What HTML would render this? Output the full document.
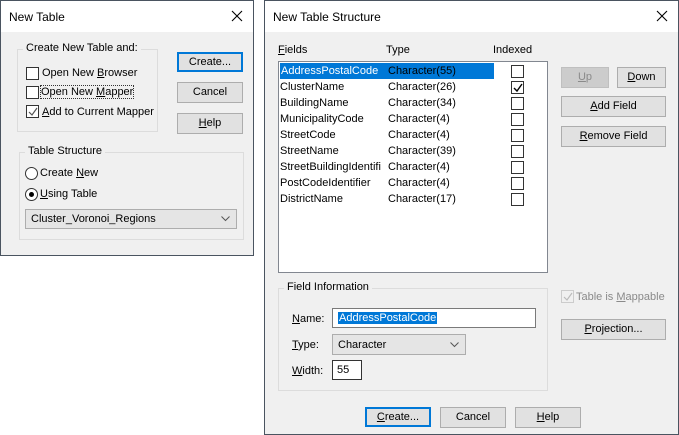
<!DOCTYPE html>
<html><head><style>
*{box-sizing:border-box;margin:0;padding:0}
body{width:679px;height:435px;background:#fff;font-family:"Liberation Sans",sans-serif;font-size:11px;color:#000;position:relative;overflow:hidden}
.a{position:absolute}
.dlg{position:absolute;background:#f0f0f0;border:1px solid #4a5460}
.tb{position:absolute;left:0;top:0;right:0;height:31px;background:#fff;font-size:12px;padding:9px 0 0 8px}
.x{position:absolute;right:10px;top:9px}
.grp{position:absolute;border:1px solid #dcdcdc}
.gl{position:absolute;background:#f0f0f0;padding:0 3px;top:-8px;left:5px}
.btn{position:absolute;background:#e1e1e1;border:1px solid #adadad;text-align:center;line-height:18px}
.def{border:2px solid #0078d7;line-height:16px}
.cb{position:absolute;width:13px;height:13px;border:1px solid #333;background:#fff}
.rd{position:absolute;width:13px;height:13px;border:1px solid #333;border-radius:50%;background:#fff}
.combo{position:absolute;background:#e5e5e5;border:1px solid #adadad;padding:3px 0 0 5px}
.chev{position:absolute;right:6px;top:6px}
u{text-decoration:underline}
.row{position:absolute;left:0;height:16px;line-height:16px}
</style></head><body>
<div class="dlg" style="left:0;top:0;width:254px;height:256px">
 <div class="tb">New Table<svg class="x" width="12" height="12"><path d="M1 1L11 11M11 1L1 11" stroke="#000" stroke-width="1.1"/></svg></div>
 <div class="grp" style="left:16px;top:48px;width:141px;height:83px"><span class="gl">Create New Table and:</span></div>
 <div class="cb" style="left:25px;top:66px"></div><div class="a" style="left:41px;top:66px">Open New <u>B</u>rowser</div>
 <div class="cb" style="left:25px;top:85px"></div><div class="a" style="left:40px;top:85px;outline:1px dotted #333">Open New <u>M</u>apper</div>
 <div class="cb" style="left:25px;top:104px"><svg class="a" style="left:1px;top:1px" width="10" height="10"><path d="M1 5L4 8L9 1" stroke="#555" fill="none" stroke-width="1.2"/></svg></div><div class="a" style="left:41px;top:105px"><u>A</u>dd to Current Mapper</div>
 <div class="btn def" style="left:176px;top:51px;width:66px;height:20px">Create...</div>
 <div class="btn" style="left:176px;top:81px;width:66px;height:21px">Cancel</div>
 <div class="btn" style="left:176px;top:112px;width:66px;height:21px"><u>H</u>elp</div>
 <div class="grp" style="left:18px;top:151px;width:225px;height:88px"><span class="gl">Table Structure</span></div>
 <div class="rd" style="left:24px;top:166px"></div><div class="a" style="left:39px;top:166px">Create <u>N</u>ew</div>
 <div class="rd" style="left:24px;top:187px"><div class="a" style="left:3px;top:3px;width:5px;height:5px;border-radius:50%;background:#000"></div></div><div class="a" style="left:39px;top:187px"><u>U</u>sing Table</div>
 <div class="combo" style="left:24px;top:208px;width:212px;height:20px">Cluster_Voronoi_Regions<svg class="chev" width="9" height="6"><path d="M0.5 0.5L4.5 4.5L8.5 0.5" stroke="#555" fill="none"/></svg></div>
</div>

<div class="dlg" style="left:264px;top:0;width:415px;height:435px">
 <div class="tb">New Table Structure<svg class="x" width="12" height="12"><path d="M1 1L11 11M11 1L1 11" stroke="#000" stroke-width="1.1"/></svg></div>
 <div class="a" style="left:13px;top:43px"><u>F</u>ields</div>
 <div class="a" style="left:121px;top:43px">Type</div>
 <div class="a" style="left:228px;top:43px">Indexed</div>
 <div class="a" style="left:13px;top:60px;width:270px;height:212px;background:#fff;border:1px solid #828790">
  <div class="a" style="left:1px;top:1px;width:214px;height:16px;background:#0078d7"></div>
  <div class="a" style="left:1px;top:1px;width:260px">
   <div class="row" style="top:0;color:#fff;left:1px">AddressPostalCode</div><div class="row" style="top:0;left:108px">Character(55)</div>
   <div class="row" style="top:16px">ClusterName</div><div class="row" style="top:16px;left:108px">Character(26)</div>
   <div class="row" style="top:32px">BuildingName</div><div class="row" style="top:32px;left:108px">Character(34)</div>
   <div class="row" style="top:48px">MunicipalityCode</div><div class="row" style="top:48px;left:108px">Character(4)</div>
   <div class="row" style="top:64px">StreetCode</div><div class="row" style="top:64px;left:108px">Character(4)</div>
   <div class="row" style="top:80px">StreetName</div><div class="row" style="top:80px;left:108px">Character(39)</div>
   <div class="row" style="top:96px">StreetBuildingIdentifi</div><div class="row" style="top:96px;left:108px">Character(4)</div>
   <div class="row" style="top:112px">PostCodeIdentifier</div><div class="row" style="top:112px;left:108px">Character(4)</div>
   <div class="row" style="top:128px">DistrictName</div><div class="row" style="top:128px;left:108px">Character(17)</div>
  </div>
  <div class="cb" style="left:232px;top:3px"></div>
  <div class="cb" style="left:232px;top:19px"><svg class="a" style="left:1px;top:1px" width="10" height="10"><path d="M1 5L4 8L9 1" stroke="#000" fill="none" stroke-width="1.4"/></svg></div>
  <div class="cb" style="left:232px;top:35px"></div>
  <div class="cb" style="left:232px;top:51px"></div>
  <div class="cb" style="left:232px;top:67px"></div>
  <div class="cb" style="left:232px;top:83px"></div>
  <div class="cb" style="left:232px;top:99px"></div>
  <div class="cb" style="left:232px;top:115px"></div>
  <div class="cb" style="left:232px;top:131px"></div>
 </div>
 <div class="btn" style="left:296px;top:66px;width:48px;height:21px;background:#ccc;border-color:#bfbfbf;color:#8a8a8a"><u>U</u>p</div>
 <div class="btn" style="left:352px;top:66px;width:49px;height:21px"><u>D</u>own</div>
 <div class="btn" style="left:296px;top:95px;width:105px;height:21px"><u>A</u>dd Field</div>
 <div class="btn" style="left:296px;top:125px;width:105px;height:21px"><u>R</u>emove Field</div>
 <div class="grp" style="left:13px;top:287px;width:270px;height:103px"><span class="gl">Field Information</span></div>
 <div class="a" style="left:27px;top:312px"><u>N</u>ame:</div>
 <div class="a" style="left:67px;top:307px;width:204px;height:20px;background:#fff;border:1px solid #7a7a7a"><span class="a" style="left:5px;top:3px;background:#0078d7;color:#fff;padding:0 1px">AddressPostalCode</span></div>
 <div class="a" style="left:27px;top:338px"><u>T</u>ype:</div>
 <div class="combo" style="left:67px;top:333px;width:134px;height:21px;padding-top:4px">Character<svg class="chev" width="9" height="6" style="top:7px"><path d="M0.5 0.5L4.5 4.5L8.5 0.5" stroke="#555" fill="none"/></svg></div>
 <div class="a" style="left:27px;top:364px"><u>W</u>idth:</div>
 <div class="a" style="left:67px;top:359px;width:30px;height:20px;background:#fff;border:1px solid #333;padding:3px 0 0 4px">55</div>
 <div class="cb" style="left:296px;top:289px;border-color:#ccc;background:#f0f0f0"><svg class="a" style="left:1px;top:1px" width="10" height="10"><path d="M1 5L4 8L9 1" stroke="#bbb" fill="none" stroke-width="1.2"/></svg></div>
 <div class="a" style="left:311px;top:290px;color:#8a8a8a">Table is <u>M</u>appable</div>
 <div class="btn" style="left:296px;top:318px;width:105px;height:21px"><u>P</u>rojection...</div>
 <div class="btn def" style="left:100px;top:406px;width:66px;height:20px"><u>C</u>reate...</div>
 <div class="btn" style="left:175px;top:406px;width:66px;height:21px">Cancel</div>
 <div class="btn" style="left:250px;top:406px;width:66px;height:21px"><u>H</u>elp</div>
</div>
</body></html>
